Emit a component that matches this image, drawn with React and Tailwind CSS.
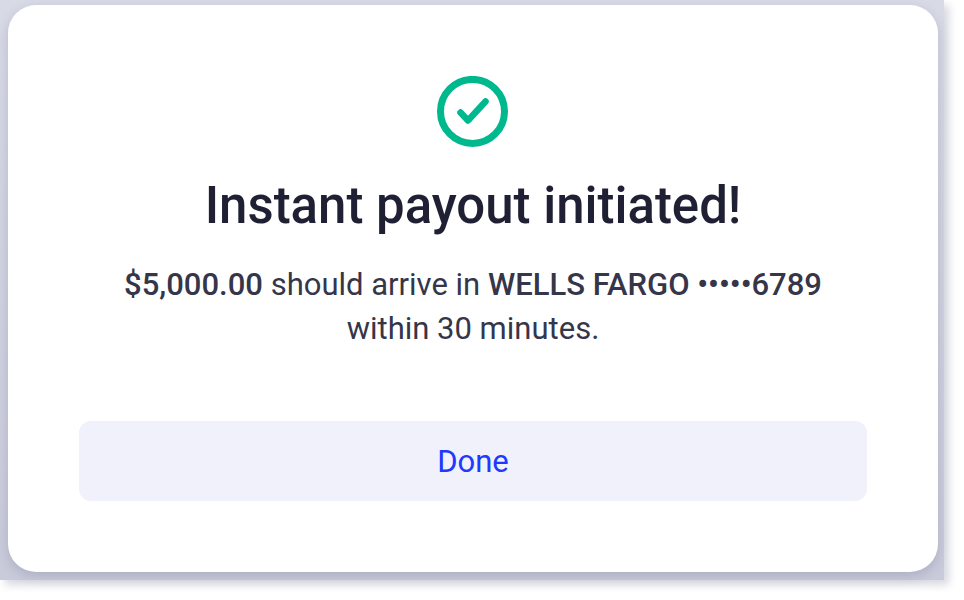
export default function App() {
  return (
    <div className="w-[964px] h-[600px] bg-white overflow-hidden font-['Roboto',sans-serif]">
      <div className="w-[944px] h-[580px] bg-gradient-to-b from-[#d8dae6] to-[#c9cbdb] shadow-[5px_5px_8px_rgba(60,64,100,0.2)] pt-[5px] pl-2">
        <div className="w-[930px] h-[567px] bg-white rounded-[28px] shadow-[0_4px_12px_rgba(60,64,100,0.2)] flex flex-col items-center pt-[71px] px-[71px]">
          <svg width="72" height="72" viewBox="0 0 72 72" fill="none">
            <circle cx="35.5" cy="35.4" r="32" stroke="#00b88d" strokeWidth="7" />
            <path d="M23.5 36.5L31 44.5L48.5 25.5" stroke="#00b88d" strokeWidth="6.5" strokeLinecap="round" strokeLinejoin="round" />
          </svg>
          <h1 className="mt-[26px] text-[50.95px] leading-[64px] font-medium text-[#1f2033]">Instant payout initiated!</h1>
          <p className="mt-[25px] w-full text-center text-[31px] leading-[44px] text-[#35364a]">
            <span className="font-medium">$5,000.00</span> should arrive in <span className="font-medium">WELLS FARGO •••••6789</span>
            <br />
            within 30 minutes.
          </p>
          <button className="mt-[70px] w-full h-20 pt-[2px] rounded-xl bg-[#f0f1fa] text-[31px] text-[#2138ff] flex items-center justify-center">Done</button>
        </div>
      </div>
    </div>
  );
}
